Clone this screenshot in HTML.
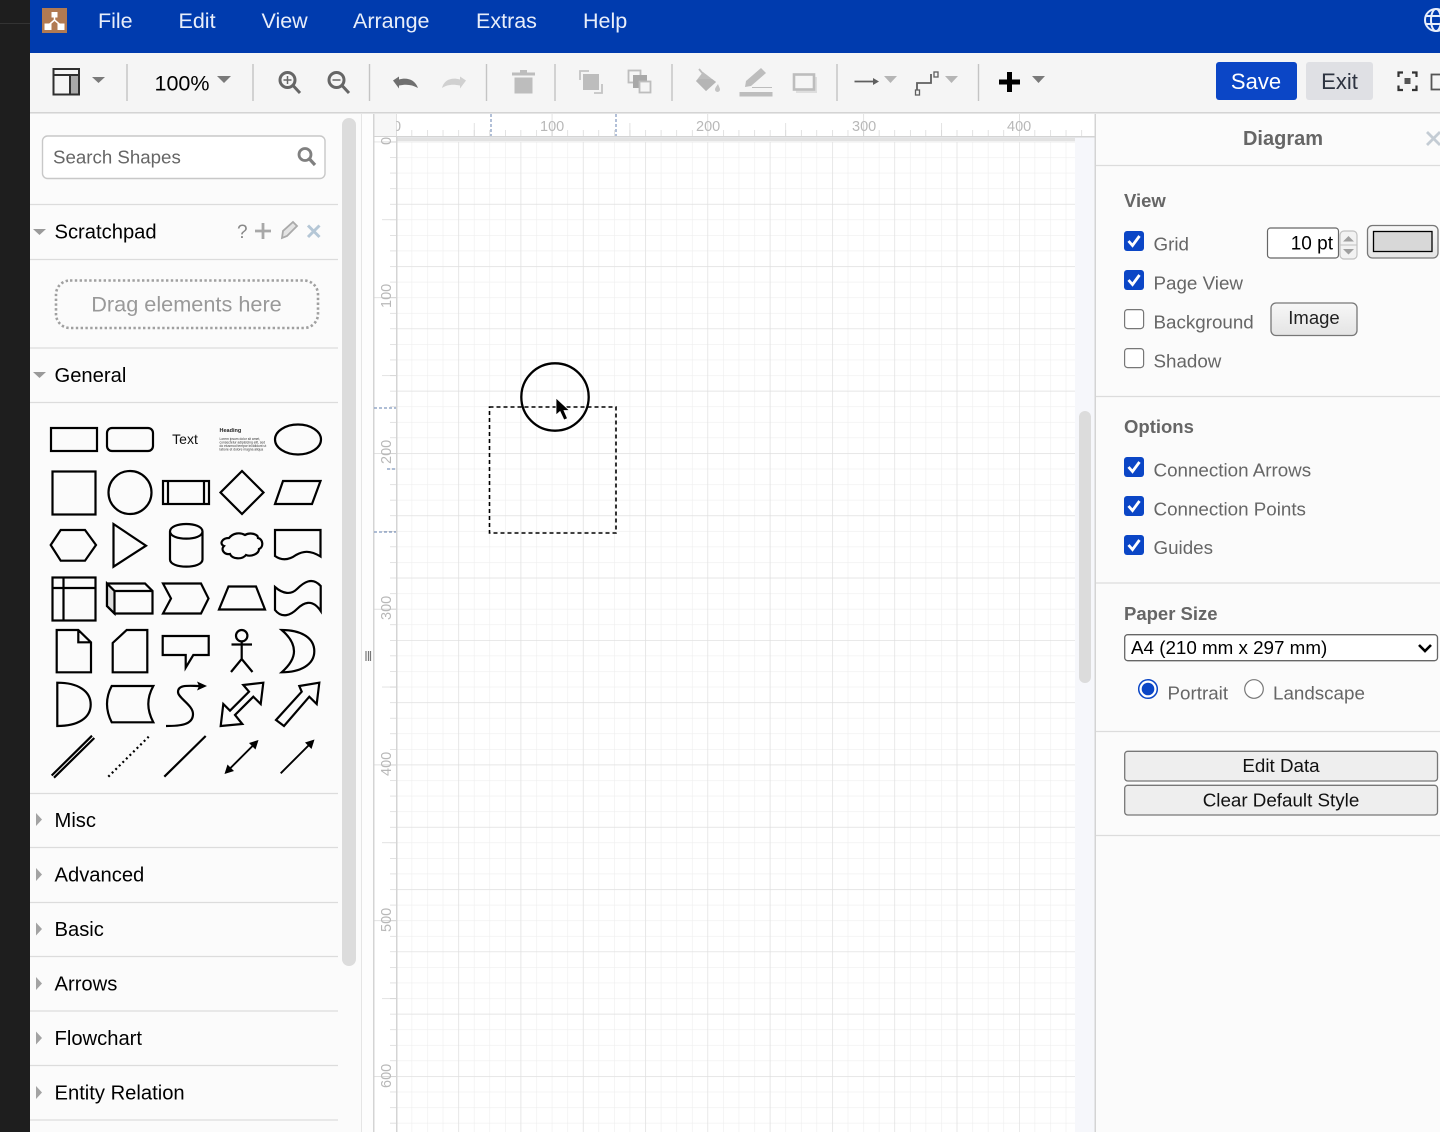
<!DOCTYPE html>
<html><head><meta charset="utf-8"><title>Diagram editor</title>
<style>
html,body{margin:0;padding:0;width:1440px;height:1132px;overflow:hidden;background:#fff}
svg{display:block}
text{font-family:"Liberation Sans",sans-serif}
.m{fill:#e8eefa;font-size:21.5px}
.sec{fill:#000;font-size:20.2px}
.lb{fill:#666;font-size:18.8px}
.h{fill:#666;font-size:18.5px;font-weight:bold}
.r{fill:#b8b8b8;font-size:14.5px}
.s{fill:none;stroke:#000;stroke-width:2.2}
.sep{stroke:#c4c4c4;stroke-width:1.4}
.ln{stroke:#dcdcdc;stroke-width:1.3}
.dd{fill:#7a7a7a}
.ddl{fill:#b5b5b5}
.g{fill:#bdbdbd}
</style></head><body>
<svg width="1440" height="1132" viewBox="0 0 1440 1132" xmlns="http://www.w3.org/2000/svg">
<defs>
<pattern id="minor" patternUnits="userSpaceOnUse" x="396" y="141.6" width="15.575" height="15.575"><path d="M0 0V15.575M0 0H15.575" stroke="#eeeeee" stroke-width="1.200" fill="none"/></pattern>
<pattern id="major" patternUnits="userSpaceOnUse" x="396" y="141.6" width="62.3" height="62.3"><path d="M0 0V62.3M0 0H62.3" stroke="#dedede" stroke-width="1.200" fill="none"/></pattern>
<pattern id="th" patternUnits="userSpaceOnUse" x="396" y="114" width="15.575" height="23"><path d="M0 16V23" stroke="#cfcfcf" stroke-width="1.200"/></pattern>
<pattern id="thm" patternUnits="userSpaceOnUse" x="396" y="114" width="77.875" height="23"><path d="M0 9V23" stroke="#cfcfcf" stroke-width="1.200"/></pattern>
<pattern id="thb" patternUnits="userSpaceOnUse" x="396" y="114" width="155.75" height="23"><path d="M0 0V23" stroke="#cfcfcf" stroke-width="1.200"/></pattern>
<pattern id="tv" patternUnits="userSpaceOnUse" x="374" y="141.6" width="23" height="15.575"><path d="M16 0H23" stroke="#cfcfcf" stroke-width="1.200"/></pattern>
<pattern id="tvm" patternUnits="userSpaceOnUse" x="374" y="141.6" width="23" height="77.875"><path d="M8 0H23" stroke="#cfcfcf" stroke-width="1.200"/></pattern>
<pattern id="tvb" patternUnits="userSpaceOnUse" x="374" y="141.6" width="23" height="155.75"><path d="M0 0H23" stroke="#cfcfcf" stroke-width="1.200"/></pattern>
<linearGradient id="btn" x1="0" y1="0" x2="0" y2="1"><stop offset="0" stop-color="#f7f7f7"/><stop offset="1" stop-color="#e4e4e4"/></linearGradient>
</defs>

<!-- dark column -->
<rect width="30" height="1132" fill="#1e1e1e"/>
<rect y="23" width="30" height="1" fill="#333"/>

<!-- menubar -->
<rect x="30" width="1410" height="53" fill="#003bae"/>
<rect x="42" y="8" width="25" height="25" fill="#b17a52"/>
<path d="M54.500 14V20M54.500 20L47.500 26M54.500 20L61.500 26" stroke="#fff" stroke-width="1.500" fill="none"/>
<rect x="51.500" y="12" width="6" height="5.500" fill="#fff"/><rect x="44.500" y="23.500" width="7" height="6.500" fill="#fff"/><rect x="57.500" y="23.500" width="7" height="6.500" fill="#fff"/>
<text class="m" x="98" y="28">File</text>
<text class="m" x="178.500" y="28">Edit</text>
<text class="m" x="261.500" y="28">View</text>
<text class="m" x="353" y="28">Arrange</text>
<text class="m" x="476" y="28">Extras</text>
<text class="m" x="583" y="28">Help</text>
<g fill="none" stroke="#e8eefa" stroke-width="2"><circle cx="1436" cy="20" r="11"/><ellipse cx="1436" cy="20" rx="5" ry="11"/><path d="M1425 16H1447M1425 24H1447"/></g>

<!-- toolbar -->
<rect x="30" y="53" width="1410" height="60" fill="#f5f5f5"/>
<rect x="30" y="112" width="1410" height="1.600" fill="#d4d4d4"/>
<g class="sep"><path d="M127 64V101M253 64V101M369.500 64V101M486.500 64V101M555 64V101M672 64V101M837 64V101M978.500 64V101"/></g>
<!-- layout -->
<rect x="70" y="75" width="9" height="19" fill="#a8a8a8"/>
<path d="M53.500 69H79V94.500H53.500ZM53.500 75H79M70 75V94.500" fill="none" stroke="#2f2f2f" stroke-width="2"/>
<path class="dd" d="M92 77H105L98.500 83Z"/>
<text x="154.500" y="90.500" font-size="21.500" fill="#000">100%</text>
<path class="dd" d="M217 76H231L224 83Z"/>
<!-- zoom -->
<g fill="none" stroke="#666" stroke-width="3"><circle cx="287.500" cy="80" r="7.500"/><path d="M293 85.500L300 93"/><circle cx="336.500" cy="80" r="7.500"/><path d="M342 85.500L349 93"/></g>
<path d="M283.500 80H291.500M287.500 76V84M332.500 80H340.500" stroke="#666" stroke-width="1.500"/>
<!-- undo/redo -->
<path d="M393 80.500L399 76.500V79.500C407 77 415 79.500 418 88C412 84.500 406 84 399 85.500V88.500Z" fill="#6f6f6f"/>
<path d="M466 80.500L460 76.500V79.500C452 77 444 79.500 442 88C447 84.500 453 84 460 85.500V88.500Z" fill="#d0d0d0"/>
<!-- trash -->
<path class="g" d="M512 72.500H520V70H527V72.500H535V75.500H512ZM514.500 77.500H532.500V93.500H514.500Z"/>
<!-- front/back -->
<path d="M580 80V71H589M594 93H602V84" fill="none" stroke="#c4c4c4" stroke-width="1.800"/>
<rect x="583" y="74" width="16" height="16" fill="#bdbdbd"/>
<rect x="628.500" y="70.500" width="12" height="12" fill="#f5f5f5" stroke="#bdbdbd" stroke-width="1.800"/>
<rect x="633" y="75" width="14" height="13" fill="#a8a8a8"/>
<rect x="639.500" y="81.500" width="11" height="11" fill="#f5f5f5" stroke="#bdbdbd" stroke-width="1.800"/>
<!-- fill -->
<path d="M699 69L704 75" stroke="#bdbdbd" stroke-width="1.800" fill="none"/>
<path class="g" d="M703 72L716 82L706 91L696 81Z"/>
<path d="M699 79H712L716 82L706 91L696 81Z" fill="#b5b5b5"/>
<path d="M718 84C716 87 715 88 715 89.500A2.500 2.500 0 0 0 720 89.500C720 88 719 87 718 84Z" fill="#c4c4c4"/>
<!-- line color -->
<path class="g" d="M745 87L746 81L761 68L766 73L751 86Z"/>
<rect x="752" y="87" width="20" height="1" fill="#bdbdbd"/>
<rect x="739.500" y="92" width="33" height="4.500" fill="#bdbdbd"/>
<!-- shadow -->
<rect x="796" y="77" width="21" height="16" fill="#dedede"/>
<rect x="794" y="74.500" width="20" height="15" fill="#f5f5f5" stroke="#bdbdbd" stroke-width="2.600"/>
<!-- connection -->
<path d="M854.500 81.500H876" stroke="#5f5f5f" stroke-width="1.800"/><path d="M873 78L879 81.500L873 85Z" fill="#5f5f5f"/>
<path class="ddl" d="M884 76H897L890.500 83Z"/>
<path d="M917 92V83H931V74" fill="none" stroke="#5f5f5f" stroke-width="1.800"/>
<rect x="915.500" y="90" width="4" height="5" fill="#f5f5f5" stroke="#5f5f5f" stroke-width="1.300"/>
<rect x="934" y="72" width="4" height="5" fill="#f5f5f5" stroke="#5f5f5f" stroke-width="1.300"/>
<path class="ddl" d="M945 76H958L951.500 83Z"/>
<!-- plus -->
<path d="M1009.500 72V92M999 82H1020" stroke="#000" stroke-width="5"/>
<path class="dd" d="M1032 76H1045L1038.500 83Z"/>
<!-- save exit -->
<rect x="1216" y="62" width="81" height="38" rx="3" fill="#0b46c6"/>
<text x="1256" y="89" font-size="22" fill="#fff" text-anchor="middle">Save</text>
<rect x="1306" y="62" width="67" height="38" rx="3" fill="#dfe0e4"/>
<text x="1339.500" y="89" font-size="22" fill="#2d3340" text-anchor="middle">Exit</text>
<path d="M1398.500 77V72.500H1403M1412 72.500H1416.500V77M1398.500 85.500V90H1403M1412 90H1416.500V85.500" fill="none" stroke="#333" stroke-width="2.200"/>
<rect x="1404.500" y="78" width="6" height="6" fill="#555"/>
<rect x="1431.500" y="74.500" width="14" height="15" fill="none" stroke="#555" stroke-width="1.800"/>

<!-- left sidebar -->
<rect x="30" y="114" width="331" height="1018" fill="#fbfbfb"/>
<rect x="342" y="118" width="14" height="848" rx="7" fill="#dcdcdc"/>
<rect x="361" y="114" width="1" height="1018" fill="#e5e5e5"/>
<rect x="362" y="114" width="11" height="1018" fill="#fdfdfd"/>
<rect x="373" y="114" width="1.500" height="1018" fill="#d4d4d4"/>
<path d="M366 651V661M368.500 651V661M370.500 651V661" stroke="#777" stroke-width="1.200"/>

<rect x="42.500" y="136" width="282.500" height="42.500" rx="5" fill="#fff" stroke="#c8c8c8" stroke-width="1.400"/>
<text x="53" y="163.500" font-size="18.700" fill="#666">Search Shapes</text>
<circle cx="305" cy="154.500" r="6" fill="none" stroke="#808080" stroke-width="2.800"/><path d="M309.500 159L315 165" stroke="#808080" stroke-width="3.200"/>

<g class="ln"><path d="M30 204.500H338M30 259.500H338M30 348H338M30 402.500H338M30 793.500H338M30 847.500H338M30 902.500H338M30 956.500H338M30 1011H338M30 1065.500H338M30 1120H338"/></g>
<path d="M33 229H46L39.500 235Z" fill="#9a9a9a"/>
<text class="sec" x="54.500" y="238.500">Scratchpad</text>
<text x="237" y="238" font-size="19" fill="#888">?</text>
<path d="M263 223V239M255 231H271" stroke="#a8a8a8" stroke-width="2.800"/>
<path d="M282 238L283 231L293 222L297 226L287 236Z" fill="#e4e4e4" stroke="#aaa" stroke-width="1.800"/>
<path d="M308 225.500L319.500 237M319.500 225.500L308 237" stroke="#b5c7d6" stroke-width="3"/>
<rect x="56" y="280.500" width="262" height="47.500" rx="14" fill="none" stroke="#a0a0a0" stroke-width="2.600" stroke-dasharray="2.400 2.400"/>
<text x="186.500" y="311.500" font-size="21.700" fill="#999" text-anchor="middle">Drag elements here</text>

<path d="M33 372H46L39.500 378Z" fill="#9a9a9a"/>
<text class="sec" x="54.500" y="382">General</text>

<!-- shapes -->
<g class="s">
<rect x="51" y="428" width="46" height="23"/>
<rect x="107" y="428" width="46" height="23" rx="5"/>
<ellipse cx="298" cy="439.500" rx="23" ry="15"/>
<rect x="52.500" y="471.500" width="43" height="43"/>
<circle cx="130" cy="492.500" r="21.500"/>
<rect x="163" y="481" width="46" height="23"/><path d="M168 481V504M204 481V504"/>
<path d="M242 471L263.500 492.500L242 514L220.500 492.500Z"/>
<path d="M275 504L283 481H320.500L312 504Z"/>
<path d="M50.700 545L60.700 530H85L96 545L85 560.700H60.700Z"/>
<path d="M113.500 524L146 545.700L113.500 566.700Z"/>
<path d="M170 531.500C170 521.500 202.500 521.500 202.500 531.500V559.500C202.500 569 170 569 170 559.500ZM170 531.500C170 541 202.500 541 202.500 531.500"/>
<path d="M229 538C233 533 240 532 245 535C250 532 258 534 258 538C263 539 264 547 259 549C259 554 251 557 246 555C242 560 232 559 230 554C225 555 220 550 224 546C219 544 222 538 229 538Z"/>
<path d="M275 530H320.500V556.500C310 550 303 551 296 555C289 560 282 561 275 556Z"/>
<rect x="52.500" y="577.500" width="43" height="43"/><path d="M63.500 577.500V620.500M52.500 588H95.500"/>
<path d="M107 606V583.500H145L152.500 591V613.500H114.500Z" fill="#fbfbfb"/>
<path d="M107 583.500L114.500 591V613.500L107 606Z" fill="#ddd"/><path d="M114.500 591H152.500"/>
<path d="M163 583.500H201L208.500 598.500L201 613.500H163L171 598.500Z"/>
<path d="M228.500 586.500H256L265 609.500H219Z"/>
<path d="M275 587C283 594 291 595 297 589C303 583 312 576 320.700 586V611C312 598 303 603 297 609C291 615 282 619 275 610Z"/>
<path d="M56.700 630H78.300L91 642.300V672.300H56.700ZM78.300 630V642.300H91"/>
<path d="M112.700 672.300V643L126.700 630H147.300V672.300Z"/>
<path d="M162.700 636H208.700V655H193.300L185.700 667.700V655H162.700Z"/>
<circle cx="241.700" cy="635.700" r="5.700"/><path d="M241.700 641.500V659M231.500 644.500H252M231 672L241.700 659L252.500 672"/>
<path d="M281.700 630C300 630 314.300 637 314.300 651.300C314.300 665 300 672.300 281.700 672.300C290 665 294 658 294 651.300C294 644 290 637 281.700 630Z"/>
<path d="M57.300 682.700C78 682.700 90.700 691 90.700 704.500C90.700 718 78 726 57.300 726Z"/>
<path d="M111.700 686H153.300C150 692 148.300 698 148.300 704C148.300 710 150 716 153.300 722.300H111.700C108.500 716 107 710 107 704C107 698 108.500 692 111.700 686Z"/>
<path d="M166 726C180 726 193 725 193 714C193 705 178 698 178 692C178 684 190 686 199 686"/>
<path d="M263.300 682.700L260.700 704L253.300 696.700L235 715L242.300 724L220.700 726L223.300 704L230 710.700L249 691.700L243.300 685Z"/>
<path d="M319.300 682.700L316.700 704L309.300 696.700L284 726L276 720L301.700 691.700L299.300 686Z"/>
<path d="M51.700 775.500L92 735.700M54 777.700L94.300 738"/>
<path d="M108.300 776.700L148.700 736.700" stroke-dasharray="2 3"/>
<path d="M164.300 776.700L205.700 736"/>
<path d="M229 769.500L254 744.500" stroke-width="1.900"/>
<path d="M280.700 773.300L310 744" stroke-width="1.900"/>
</g>
<path d="M207 686L197 681.500L199 686L197 690.500Z"/>
<path d="M258.500 740L255.500 749.500L249 743ZM224.500 774L227.500 764.500L234 771Z"/>
<path d="M314.500 739.500L311.500 749L305 742.500Z"/>
<text x="185" y="444" font-size="14" fill="#111" text-anchor="middle">Text</text>
<text x="219.500" y="432" font-size="5.500" font-weight="bold" fill="#222">Heading</text>
<g font-size="3.300" fill="#333"><text x="219.500" y="440">Lorem ipsum dolor sit amet,</text><text x="219.500" y="443.500">consectetur adipisicing elit, sed</text><text x="219.500" y="447">do eiusmod tempor incididunt ut</text><text x="219.500" y="450.500">labore et dolore magna aliqua</text></g>

<g fill="#a3a3a3"><path d="M36 813L42 819.500L36 826ZM36 868L42 874.500L36 881ZM36 922.500L42 929L36 935.500ZM36 977L42 983.500L36 990ZM36 1031.500L42 1038L36 1044.500ZM36 1086L42 1092.500L36 1099Z"/></g>
<text class="sec" x="54.500" y="827">Misc</text>
<text class="sec" x="54.500" y="881.500">Advanced</text>
<text class="sec" x="54.500" y="936">Basic</text>
<text class="sec" x="54.500" y="990.500">Arrows</text>
<text class="sec" x="54.500" y="1045">Flowchart</text>
<text class="sec" x="54.500" y="1099.500">Entity Relation</text>

<!-- canvas -->
<rect x="374.500" y="114" width="721" height="1018" fill="#f6f7fb"/>
<rect x="397" y="141" width="678" height="991" fill="#fff"/>
<rect x="397" y="141.600" width="678" height="991" fill="url(#minor)"/>
<rect x="397" y="141.600" width="678" height="991" fill="url(#major)"/>
<rect x="397" y="138" width="678" height="3" fill="#e2e2e2"/>
<!-- top ruler -->
<rect x="374.500" y="114" width="721" height="23" fill="#fff"/>
<text class="r" x="393" y="131">0</text>
<rect x="374.500" y="114" width="22" height="23" fill="#f7f7f7"/>
<rect x="396" y="114" width="699" height="23" fill="url(#th)"/>
<rect x="396" y="114" width="699" height="23" fill="url(#thm)"/>
<rect x="396" y="114" width="699" height="23" fill="url(#thb)"/>
<rect x="374.500" y="136" width="721" height="1.500" fill="#d4d4d4"/>
<path d="M491 114V136M616 114V136" stroke="#7f97bd" stroke-width="1.200" stroke-dasharray="3 2"/>
<text class="r" x="540" y="131">100</text><text class="r" x="696" y="131">200</text><text class="r" x="852" y="131">300</text><text class="r" x="1007" y="131">400</text>
<!-- left ruler -->
<rect x="374.500" y="137" width="22" height="995" fill="#fff"/>
<rect x="374" y="141.600" width="23" height="991" fill="url(#tv)"/>
<rect x="374" y="141.600" width="23" height="991" fill="url(#tvm)"/>
<rect x="374" y="141.600" width="23" height="991" fill="url(#tvb)"/>
<rect x="396" y="137" width="1.500" height="995" fill="#d4d4d4"/>
<path d="M374 408H396M374 532H396M387 469H396" stroke="#7f97bd" stroke-width="1.200" stroke-dasharray="3 2"/>
<g class="r">
<text transform="translate(391 145) rotate(-90)">0</text>
<text transform="translate(391 308) rotate(-90)">100</text>
<text transform="translate(391 464) rotate(-90)">200</text>
<text transform="translate(391 620) rotate(-90)">300</text>
<text transform="translate(391 776) rotate(-90)">400</text>
<text transform="translate(391 932) rotate(-90)">500</text>
<text transform="translate(391 1088) rotate(-90)">600</text>
</g>
<!-- canvas shapes -->
<rect x="489.500" y="407" width="126.500" height="126" fill="none" stroke="#000" stroke-width="1.600" stroke-dasharray="4 3"/>
<circle cx="555" cy="397" r="33.700" fill="none" stroke="#000" stroke-width="2.300"/>
<path d="M556 398V415L560 411.500L564 420L567.500 418.500L564 410.500H569.500Z" fill="#000" stroke="#fff" stroke-width=".8"/>
<!-- v scrollbar -->
<rect x="1079" y="411" width="12" height="272" rx="6" fill="#dcdcdc"/>

<!-- right panel -->
<rect x="1095" y="114" width="345" height="1018" fill="#fbfbfb"/>
<rect x="1094.500" y="114" width="1.500" height="1018" fill="#d4d4d4"/>
<text x="1283" y="145" font-size="20" font-weight="bold" fill="#666" text-anchor="middle">Diagram</text>
<path d="M1427 132L1440 145M1440 132L1427 145" stroke="#c4ccd4" stroke-width="2.800"/>
<g class="ln"><path d="M1096 165.500H1440M1096 396.500H1440M1096 583H1440M1096 731.500H1440M1096 835.500H1440"/></g>

<text class="h" x="1124" y="207">View</text>
<g fill="#0b46c6"><rect x="1124" y="231" width="20" height="20" rx="3"/><rect x="1124" y="270" width="20" height="20" rx="3"/><rect x="1124" y="457" width="20" height="20" rx="3"/><rect x="1124" y="496" width="20" height="20" rx="3"/><rect x="1124" y="535" width="20" height="20" rx="3"/></g>
<g fill="none" stroke="#fff" stroke-width="2.800"><path d="M1128.500 241L1132.500 245.500L1139.500 236M1128.500 280L1132.500 284.500L1139.500 275M1128.500 467L1132.500 471.500L1139.500 462M1128.500 506L1132.500 510.500L1139.500 501M1128.500 545L1132.500 549.500L1139.500 540"/></g>
<g fill="#fff" stroke="#777" stroke-width="1.200"><rect x="1124.600" y="309.600" width="19" height="19" rx="3"/><rect x="1124.600" y="348.600" width="19" height="19" rx="3"/></g>
<text class="lb" x="1153.500" y="250.500">Grid</text>
<text class="lb" x="1153.500" y="289.500">Page View</text>
<text class="lb" x="1153.500" y="328.500">Background</text>
<text class="lb" x="1153.500" y="367.500">Shadow</text>

<rect x="1267.500" y="228" width="71" height="30" rx="3" fill="#fff" stroke="#666" stroke-width="1.200"/>
<text x="1333" y="249.500" font-size="19" fill="#000" text-anchor="end">10 pt</text>
<rect x="1340" y="231" width="17" height="28" rx="4" fill="#f2f2f2" stroke="#c0c0c0" stroke-width="1.200"/>
<path d="M1340 245H1357" stroke="#c0c0c0"/>
<path d="M1343 241.500L1348.500 236L1354 241.500ZM1343 249L1348.500 254.500L1354 249Z" fill="#a0a0a0"/>
<rect x="1367.500" y="225.500" width="70.500" height="32.500" rx="5" fill="url(#btn)" stroke="#777" stroke-width="1.300"/>
<rect x="1373.500" y="231.500" width="58.500" height="20" fill="#d8d8d8" stroke="#000" stroke-width="1.300"/>
<rect x="1271" y="303" width="86" height="32.500" rx="5" fill="url(#btn)" stroke="#777" stroke-width="1.300"/>
<text x="1314" y="324" font-size="18.500" fill="#222" text-anchor="middle">Image</text>

<text class="h" x="1124" y="433">Options</text>
<text class="lb" x="1153.500" y="476.500">Connection Arrows</text>
<text class="lb" x="1153.500" y="515.500">Connection Points</text>
<text class="lb" x="1153.500" y="554">Guides</text>

<text class="h" x="1124" y="620">Paper Size</text>
<rect x="1124.700" y="634.700" width="312.800" height="26" rx="3" fill="#fff" stroke="#666" stroke-width="1.300"/>
<text x="1131" y="654" font-size="18.800" fill="#000">A4 (210 mm x 297 mm)</text>
<path d="M1419 645L1425 651L1431 645" fill="none" stroke="#000" stroke-width="2.600"/>
<circle cx="1148" cy="689" r="9.300" fill="#fff" stroke="#0b46c6" stroke-width="1.500"/><circle cx="1148" cy="689" r="6.300" fill="#0b46c6"/>
<circle cx="1254" cy="689" r="9.300" fill="#fff" stroke="#777" stroke-width="1.200"/>
<text class="lb" x="1167.500" y="699.500">Portrait</text>
<text class="lb" x="1273" y="699.500">Landscape</text>

<rect x="1124.700" y="751.300" width="312.800" height="29.700" rx="3" fill="#eee" stroke="#777" stroke-width="1.300"/>
<rect x="1124.700" y="785.300" width="312.800" height="29.700" rx="3" fill="#eee" stroke="#777" stroke-width="1.300"/>
<text x="1281" y="772" font-size="18.800" fill="#111" text-anchor="middle">Edit Data</text>
<text x="1281" y="806.500" font-size="18.800" fill="#111" text-anchor="middle">Clear Default Style</text>
</svg>
</body></html>
